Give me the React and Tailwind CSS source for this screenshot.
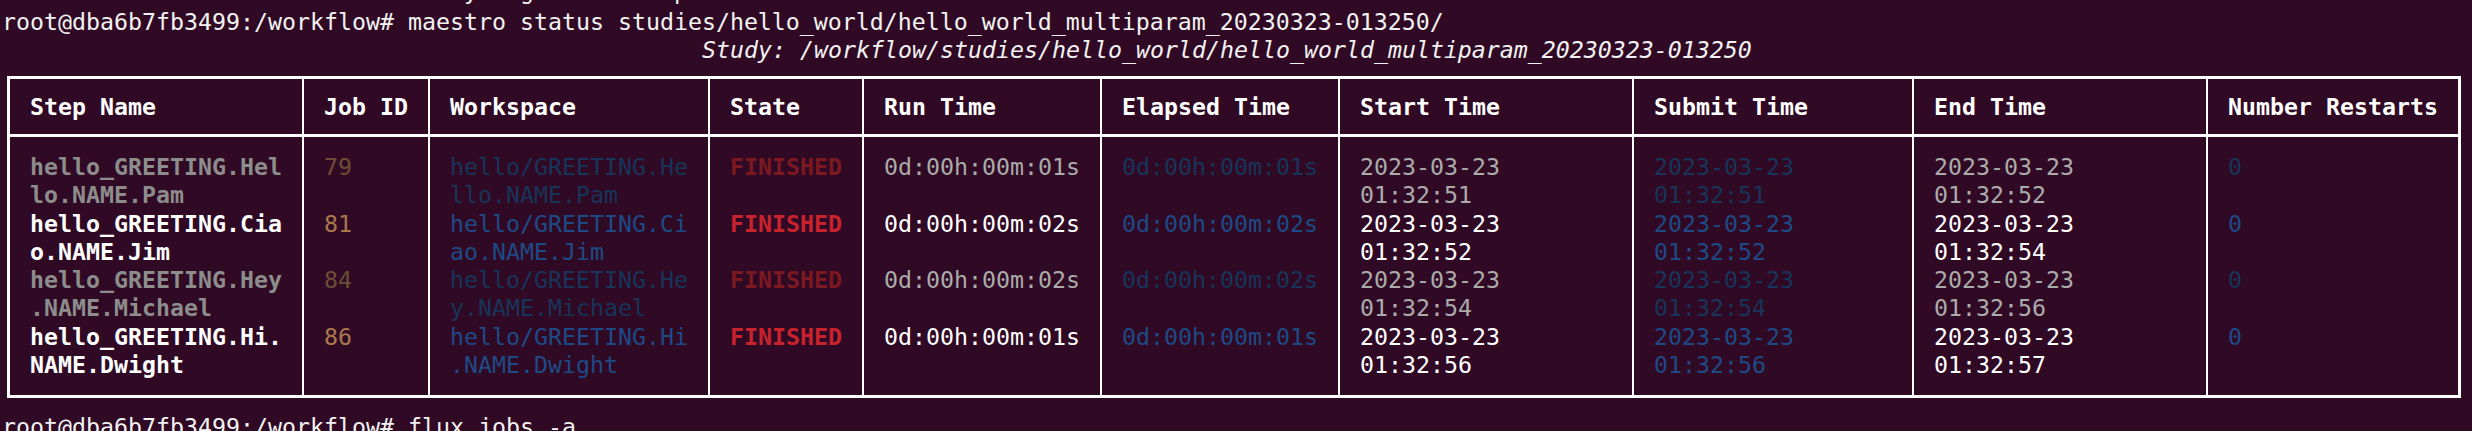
import React from "react";

const FONT = { fontFamily: '"DejaVu Sans Mono", "Liberation Mono", monospace' };

const rows = [
  {
    dim: true,
    step: ["hello_GREETING.Hel", "lo.NAME.Pam"],
    job: "79",
    ws: ["hello/GREETING.He", "llo.NAME.Pam"],
    run: "0d:00h:00m:01s",
    el: "0d:00h:00m:01s",
    start: ["2023-03-23", "01:32:51"],
    sub: ["2023-03-23", "01:32:51"],
    end: ["2023-03-23", "01:32:52"],
  },
  {
    dim: false,
    step: ["hello_GREETING.Cia", "o.NAME.Jim"],
    job: "81",
    ws: ["hello/GREETING.Ci", "ao.NAME.Jim"],
    run: "0d:00h:00m:02s",
    el: "0d:00h:00m:02s",
    start: ["2023-03-23", "01:32:52"],
    sub: ["2023-03-23", "01:32:52"],
    end: ["2023-03-23", "01:32:54"],
  },
  {
    dim: true,
    step: ["hello_GREETING.Hey", ".NAME.Michael"],
    job: "84",
    ws: ["hello/GREETING.He", "y.NAME.Michael"],
    run: "0d:00h:00m:02s",
    el: "0d:00h:00m:02s",
    start: ["2023-03-23", "01:32:54"],
    sub: ["2023-03-23", "01:32:54"],
    end: ["2023-03-23", "01:32:56"],
  },
  {
    dim: false,
    step: ["hello_GREETING.Hi.", "NAME.Dwight"],
    job: "86",
    ws: ["hello/GREETING.Hi", ".NAME.Dwight"],
    run: "0d:00h:00m:01s",
    el: "0d:00h:00m:01s",
    start: ["2023-03-23", "01:32:56"],
    sub: ["2023-03-23", "01:32:56"],
    end: ["2023-03-23", "01:32:57"],
  },
];

const C = {
  step: ["text-[#8d8d8d] font-bold", "text-white font-bold"],
  job: ["text-[#6e4d36]", "text-[#a8784c]"],
  blue: ["text-[#17345a]", "text-[#1d4a86]"],
  state: ["text-[#7c1820] font-bold", "text-[#c8222d] font-bold"],
  grey: ["text-[#ababab]", "text-white"],
};

function Lines({ lines }) {
  const arr = Array.isArray(lines) ? lines : [lines];
  return (
    <>
      {arr.map((l, i) => (
        <div key={i} className="whitespace-pre">
          {l}
        </div>
      ))}
    </>
  );
}

function Column({ width, first, header, cls, get }) {
  return (
    <div className={`flex flex-col ${first ? "" : "border-l-2 border-white"}`} style={{ width }}>
      <div className="pl-[20px] pt-[13.9px] pb-[12.8px] border-b-[3px] border-white font-bold text-white whitespace-pre">
        {header}
      </div>
      <div className="pl-[20px] pt-[16px] pb-[15.6px]">
        {rows.map((r, i) => (
          <div key={i} className={`h-[56.6px] ${cls[r.dim ? 0 : 1]}`}>
            <Lines lines={get(r)} />
          </div>
        ))}
      </div>
    </div>
  );
}

const cols = [
  { width: 292, header: "Step Name", cls: C.step, get: (r) => r.step },
  { width: 126, header: "Job ID", cls: C.job, get: (r) => r.job },
  { width: 280, header: "Workspace", cls: C.blue, get: (r) => r.ws },
  { width: 154, header: "State", cls: C.state, get: () => "FINISHED" },
  { width: 238, header: "Run Time", cls: C.grey, get: (r) => r.run },
  { width: 238, header: "Elapsed Time", cls: C.blue, get: (r) => r.el },
  { width: 294, header: "Start Time", cls: C.grey, get: (r) => r.start },
  { width: 280, header: "Submit Time", cls: C.blue, get: (r) => r.sub },
  { width: 294, header: "End Time", cls: C.grey, get: (r) => r.end },
  { width: 252, header: "Number Restarts", cls: C.blue, get: () => "0" },
];

export default function App() {
  return (
    <div
      className="w-[2472px] h-[431px] overflow-hidden bg-[#300a24] text-[#f2f2f2] text-[23.25px] leading-[28.3px] pl-[2px]"
      style={FONT}
    >
      <div className="h-[8px] overflow-hidden">
        <div className="-mt-[23.2px] h-[28.3px] whitespace-pre">
          {"                                 y   g          p"}
        </div>
      </div>
      <div className="whitespace-pre">
        root@dba6b7fb3499:/workflow# maestro status studies/hello_world/hello_world_multiparam_20230323-013250/
      </div>
      <div className="whitespace-pre italic pl-[700px]">
        Study: /workflow/studies/hello_world/hello_world_multiparam_20230323-013250
      </div>
      <div className="mt-[11.4px] ml-[5px] w-[2454px] border-[3px] border-white flex">
        {cols.map((c, i) => (
          <Column key={i} first={i === 0} {...c} />
        ))}
      </div>
      <div className="mt-[14.85px] whitespace-pre">root@dba6b7fb3499:/workflow# flux jobs -a</div>
    </div>
  );
}
